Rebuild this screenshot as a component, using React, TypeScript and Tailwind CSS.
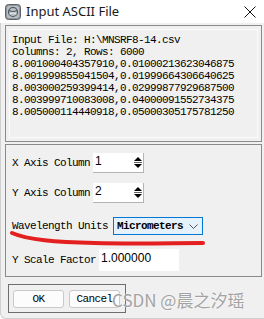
const mono = "font-['Liberation_Mono',monospace] text-[11px] tracking-[-0.6px]";

const dataLines = [
  "Input File: H:\\MNSRF8-14.csv",
  "Columns: 2, Rows: 6000",
  "8.001000404357910,0.01000213623046875",
  "8.001999855041504,0.01999664306640625",
  "8.003000259399414,0.02999877929687500",
  "8.003999710083008,0.04000091552734375",
  "8.005000114440918,0.05000305175781250",
];

const AppIcon = () => (
  <svg width="16" height="16" viewBox="0 0 16 16">
    <rect x="0.5" y="0.5" width="15" height="15" rx="3" fill="#8f969c" stroke="#5d6468" />
    <rect x="2" y="2" width="12" height="12" rx="2" fill="#b9bfc4" />
    <circle cx="8" cy="8" r="4.5" fill="none" stroke="#4a5257" strokeWidth="1.2" />
    <path d="M4 6.5 Q8 9 12 6.5" fill="none" stroke="#4a5257" strokeWidth="1" />
    <path d="M4.5 10 Q8 7.5 11.5 10" fill="none" stroke="#eef1f3" strokeWidth="1" />
  </svg>
);

const SpinBox = ({ value }: { value: string }) => (
  <div className="flex h-[20px] w-[51px] border-r border-b border-[#b4b4b4] bg-white">
    <span className="flex-1 pl-[2px] pt-[1px] font-['Liberation_Sans',sans-serif] text-[12px] leading-[14px] text-black">
      {value}
    </span>
    <div className="flex w-[9px] flex-col items-center justify-center gap-[1px] pr-[1px]">
      <svg width="8" height="4" viewBox="0 0 8 4">
        <path d="M0 4 L4 0 L8 4 Z" fill="#000" />
      </svg>
      <div className="h-px w-[8px] bg-[#606060]" />
      <svg width="8" height="4" viewBox="0 0 8 4">
        <path d="M0 0 L4 4 L8 0 Z" fill="#000" />
      </svg>
    </div>
  </div>
);

const Label = ({ children }: { children: string }) => (
  <span className={`${mono} whitespace-pre text-black`}>{children}</span>
);

export default function App() {
  return (
    <div className="relative h-[319px] w-[264px] overflow-hidden bg-white">
      <div className="flex h-[23px] items-center bg-white pl-[5px] pr-[8px]">
        <AppIcon />
        <span className="ml-[5px] font-['Noto_Sans',sans-serif] text-[13px] text-[#1a1a1a]">
          Input ASCII File
        </span>
        <svg className="ml-auto" width="12" height="12" viewBox="0 0 12 12">
          <path d="M0.5 0.5 L11.5 11.5 M11.5 0.5 L0.5 11.5" stroke="#111" strokeWidth="1" />
        </svg>
      </div>

      <div className="h-[296px] rounded-bl-[6px] border-l border-b border-[#cfcfcf] bg-[#f0f0f0] pt-[2px] pl-[4px]">
        <div className="h-[117px] w-[257px] border border-[#8a8a8a] p-[3px]">
          <div className="h-full border border-[#fbfbfb] pl-[2px] pt-[4px]">
            {dataLines.map((line) => (
              <div key={line} className={`${mono} h-[12px] whitespace-pre leading-[12px] text-black`}>
                {line}
              </div>
            ))}
          </div>
        </div>

        <div className="relative mt-[2px] flex h-[133px] w-[257px] flex-col border border-[#8a8a8a] pl-[6px] pt-[8px]">
          <div className="flex items-center gap-[3px]">
            <Label>X Axis Column</Label>
            <SpinBox value="1" />
          </div>
          <div className="mt-[10px] flex items-center gap-[3px]">
            <Label>Y Axis Column</Label>
            <SpinBox value="2" />
          </div>
          <div className="mt-[14px] flex items-center gap-[5px]">
            <Label>Wavelength Units</Label>
            <div className="flex h-[18px] w-[90px] items-center border border-[#0078d7] bg-[#e5f1fb] pl-[3px] pr-[4px]">
              <span className={`${mono} font-bold text-black`}>Micrometers</span>
              <svg className="ml-auto" width="9" height="5" viewBox="0 0 9 5">
                <path d="M0.5 0.5 L4.5 4.5 L8.5 0.5" fill="none" stroke="#555" strokeWidth="1" />
              </svg>
            </div>
          </div>
          <div className="mt-[14px] flex items-center gap-[3px]">
            <Label>Y Scale Factor</Label>
            <div className="h-[22px] w-[80px] bg-white pl-[2px] pt-[2px] font-['Liberation_Sans',sans-serif] text-[12px] leading-[14px] text-black">
              1.000000
            </div>
          </div>
        </div>

        <div className="ml-[3px] mt-[7px] flex h-[29px] w-[118px] items-center gap-[5px] border-[1.5px] border-[#6e6e6e] pl-[4px]">
          <button className={`${mono} h-[18px] w-[51px] rounded-[3px] border border-[#c9c9c9] bg-[#fcfcfc] text-black`}>
            OK
          </button>
          <button className={`${mono} h-[18px] w-[51px] rounded-[3px] border border-[#c9c9c9] bg-[#fcfcfc] text-black`}>
            Cancel
          </button>
        </div>
      </div>

      <svg className="pointer-events-none absolute left-0 top-0" width="264" height="319">
        <path
          d="M12 233 C 28 240, 55 242, 95 243 S 175 243, 203 243"
          fill="none"
          stroke="#e3201f"
          strokeWidth="4"
          strokeLinecap="round"
        />
      </svg>

      <span className="pointer-events-none absolute left-[112px] top-[289px] font-['Noto_Sans_CJK_SC',sans-serif] text-[17px] leading-[22px] text-[#a3a3a3] [text-shadow:0_0_2px_#fff]">
        CSDN @晨之汐瑶
      </span>
    </div>
  );
}
